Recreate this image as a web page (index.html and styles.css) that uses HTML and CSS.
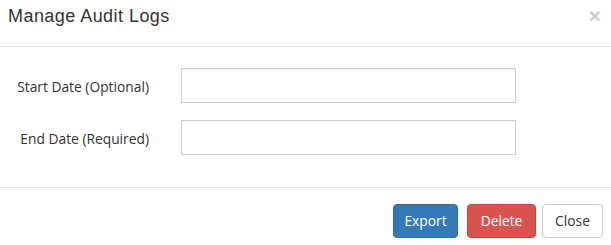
FILE: index.html
```html
<!DOCTYPE html>
<html lang="en">
<head>
<meta charset="utf-8">
<title>Manage Audit Logs</title>
<link rel="stylesheet" href="styles.css">
</head>
<body>
<div class="modal">
  <div class="modal-header">
    <h4 class="modal-title">Manage Audit Logs</h4>
    <span class="close">&times;</span>
  </div>
  <div class="modal-body">
    <div class="form-row">
      <label class="control-label" for="start">Start Date (Optional)</label>
      <input class="form-control" id="start" type="text">
    </div>
    <div class="form-row">
      <label class="control-label" for="end">End Date (Required)</label>
      <input class="form-control" id="end" type="text">
    </div>
  </div>
  <div class="modal-footer">
    <button class="btn btn-primary">Export</button>
    <button class="btn btn-danger">Delete</button>
    <button class="btn btn-default">Close</button>
  </div>
</div>
</body>
</html>
```
FILE: styles.css
```css
html, body {
  margin: 0;
  padding: 0;
  background: #fff;
}
body {
  font-family: "Open Sans", "Noto Sans", sans-serif;
  font-size: 13.8px;
  color: #333;
}
.modal {
  width: 611px;
  background: #fff;
}
.modal-header {
  height: 43px;
  padding: 3px 10px 0 8px;
  border-bottom: 1px solid #e5e5e5;
  display: flex;
  justify-content: space-between;
  align-items: flex-start;
}
.modal-title {
  margin: 0;
  font-family: "Liberation Sans", Arial, sans-serif;
  font-size: 18px;
  font-weight: normal;
  letter-spacing: 0.45px;
  line-height: 26px;
  color: #333;
}
.close {
  font-family: "Liberation Sans", Arial, sans-serif;
  font-size: 21px;
  font-weight: bold;
  line-height: 21px;
  margin-top: 2px;
  color: #000;
  opacity: 0.2;
}
.modal-body {
  padding: 21px 0 32px 0;
  display: flex;
  flex-direction: column;
  gap: 17px;
}
.form-row {
  display: flex;
  align-items: flex-start;
}
.control-label {
  width: 149px;
  text-align: right;
  padding-top: 9px;
  line-height: 20px;
  margin-right: 32px;
}
.form-control {
  box-sizing: border-box;
  width: 335px;
  height: 35px;
  margin: 0;
  padding: 6px 12px;
  border: 1px solid #ccc;
  border-radius: 0;
  font: inherit;
  box-shadow: inset 0 1px 1px rgba(0,0,0,0.05);
}
.modal-footer {
  border-top: 1px solid #e5e5e5;
  padding: 16px 8px 15px 0;
  display: flex;
  justify-content: flex-end;
}
.btn {
  box-sizing: border-box;
  height: 34px;
  padding: 0;
  font: inherit;
  line-height: 20px;
  border: 1px solid transparent;
  border-radius: 4px;
  text-align: center;
}
.btn-primary {
  width: 65px;
  color: #fff;
  background: #337ab7;
  border-color: #2e6da4;
}
.btn-danger {
  width: 69px;
  margin-left: 9px;
  color: #fff;
  background: #d9534f;
  border-color: #d43f3a;
}
.btn-default {
  width: 61px;
  margin-left: 6px;
  color: #333;
  background: #fff;
  border-color: #ccc;
}
```
